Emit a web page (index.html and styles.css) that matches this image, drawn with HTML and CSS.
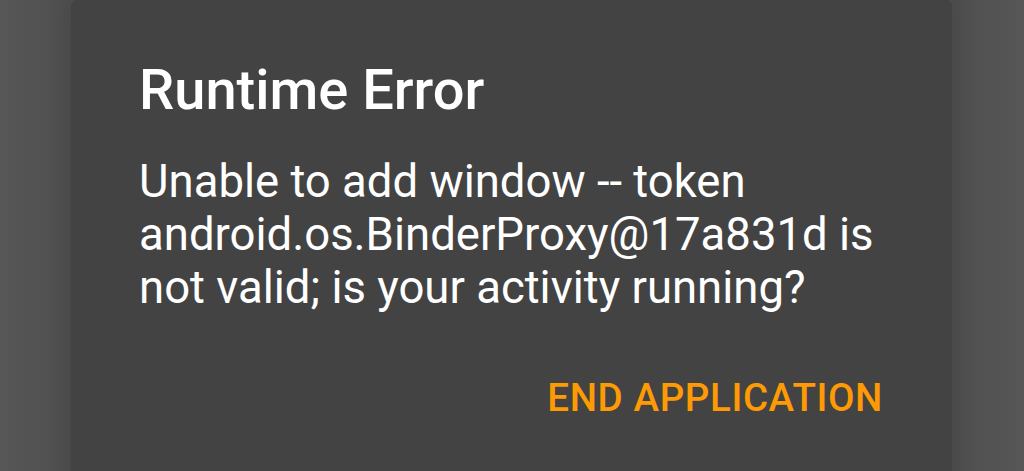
FILE: index.html
```html
<!DOCTYPE html>
<html lang="en">
<head>
<meta charset="utf-8">
<title>Runtime Error</title>
<link rel="stylesheet" href="styles.css">
</head>
<body>
<div class="screen">
  <div class="dialog">
    <h1 class="title">Runtime Error</h1>
    <p class="message">Unable to add window -- token android.os.BinderProxy@17a831d is not valid; is your activity running?</p>
    <div class="actions">
      <button class="action">END APPLICATION</button>
    </div>
  </div>
</div>
</body>
</html>
```

FILE: styles.css
```css
html, body {
  margin: 0;
  padding: 0;
  height: 100%;
}
body {
  background: #545454;
  overflow: hidden;
  font-family: Roboto, "Noto Sans", sans-serif;
}
.screen {
  height: 471px;
  overflow: hidden;
  background: linear-gradient(90deg, #575757 0%, #4e4e4e 7%, #4e4e4e 93%, #575757 100%);
}
.dialog {
  margin-left: 71px;
  width: 881px;
  height: 520px;
  box-sizing: border-box;
  padding: 58px 70px 0 68px;
  background: #434343;
  border-radius: 6px 6px 0 0;
  box-shadow: 0 0 24px rgba(0, 0, 0, 0.12);
}
.title {
  margin: 0;
  font-size: 56px;
  line-height: 64px;
  font-weight: 500;
  color: #ffffff;
}
.message {
  margin: 33px -30px 0 0;
  font-size: 45.5px;
  line-height: 53px;
  font-weight: 400;
  color: #ffffff;
}
.actions {
  display: flex;
  justify-content: flex-end;
  margin-top: 62px;
}
.action {
  background: none;
  border: 0;
  padding: 0;
  font-family: Roboto, "Noto Sans", sans-serif;
  font-size: 38.5px;
  line-height: 44px;
  font-weight: 500;
  letter-spacing: 0.6px;
  margin-right: -1px;
  color: #fd9a04;
}
```
